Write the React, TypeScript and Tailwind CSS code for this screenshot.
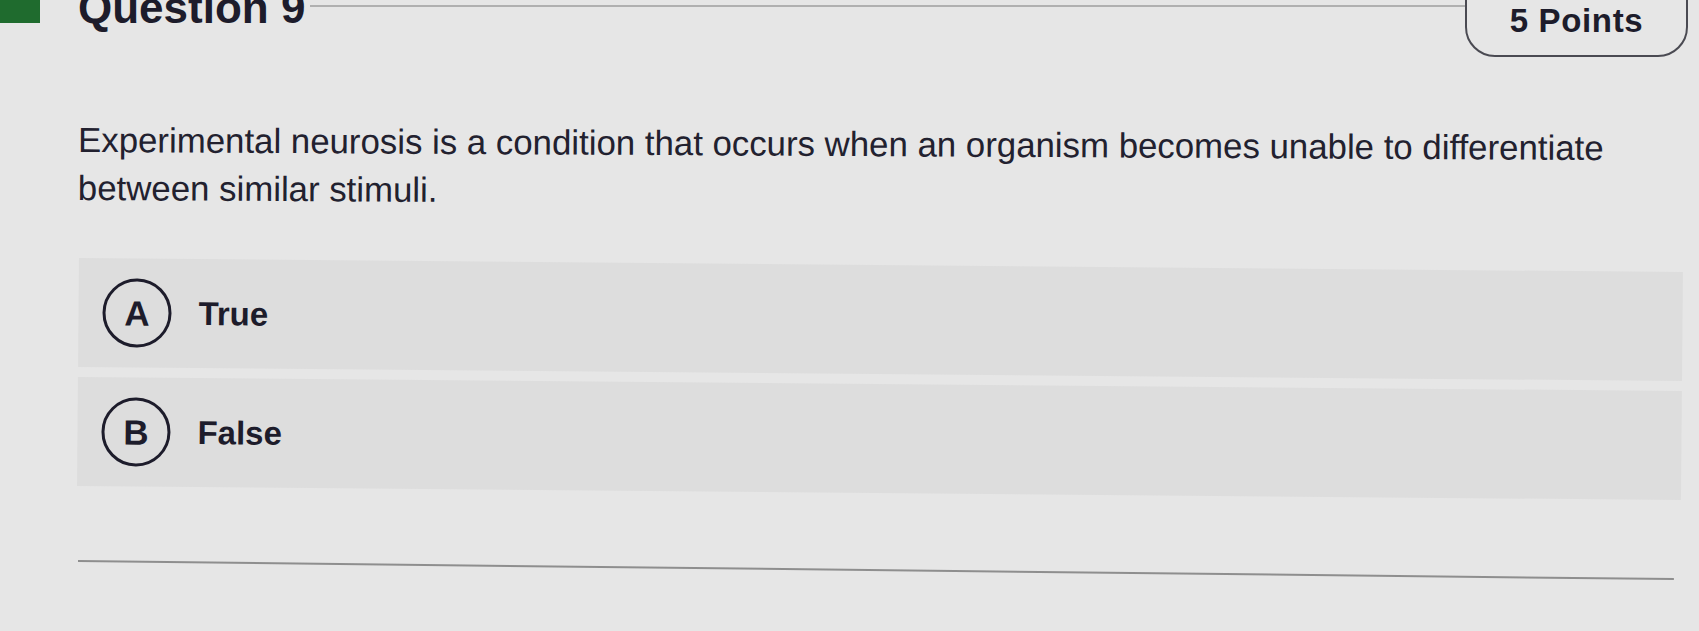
export default function App() {
  const options = [
    { letter: "A", label: "True" },
    { letter: "B", label: "False" },
  ];
  return (
    <div
      className="relative w-[1699px] h-[631px] overflow-hidden bg-[#e6e6e6] text-[#1d1c2b]"
      style={{ fontFamily: '"Liberation Sans", Arial, sans-serif' }}
    >
      <div className="flex items-start h-[57px]">
        <div className="w-[40px] h-[23px] bg-[#1f6b2e] shrink-0" />
        <div className="ml-[38px] mt-[-14px] text-[44px] leading-none font-bold whitespace-nowrap">
          Question 9
        </div>
        <div className="flex-1 h-[2px] bg-[#b0b0b0] mt-[5px] ml-[5px]" />
        <div className="w-[223px] h-[107px] mt-[-50px] mr-[11px] border-2 border-[#4a4a52] rounded-[30px] flex items-end justify-center pb-[18px] shrink-0">
          <span className="text-[33px] leading-none font-bold tracking-[0.02em]">5 Points</span>
        </div>
      </div>

      <div className="pl-[78px] pr-[17px]">
        <p className="mt-[59px] text-[34.8px] leading-[48px] text-[#22212f] origin-left rotate-[0.3deg]">
          Experimental neurosis is a condition that occurs when an organism becomes unable to differentiate between similar stimuli.
        </p>

        <div className="mt-[46px] flex flex-col gap-[10px] origin-left rotate-[0.5deg]">
          {options.map((o) => (
            <div key={o.letter} className="h-[109px] bg-[#dddddd] flex items-center pl-[24px] gap-[27px]">
              <div className="w-[69px] h-[69px] rounded-full border-[3px] border-[#1d1c2b] flex items-center justify-center">
                <span className="text-[35px] leading-none font-bold">{o.letter}</span>
              </div>
              <span className="text-[33px] leading-none font-bold">{o.label}</span>
            </div>
          ))}
        </div>

        <div className="mt-[74px] w-[1596px] h-[2px] bg-[#8e8e8e] origin-left rotate-[0.65deg]" />
      </div>
    </div>
  );
}
